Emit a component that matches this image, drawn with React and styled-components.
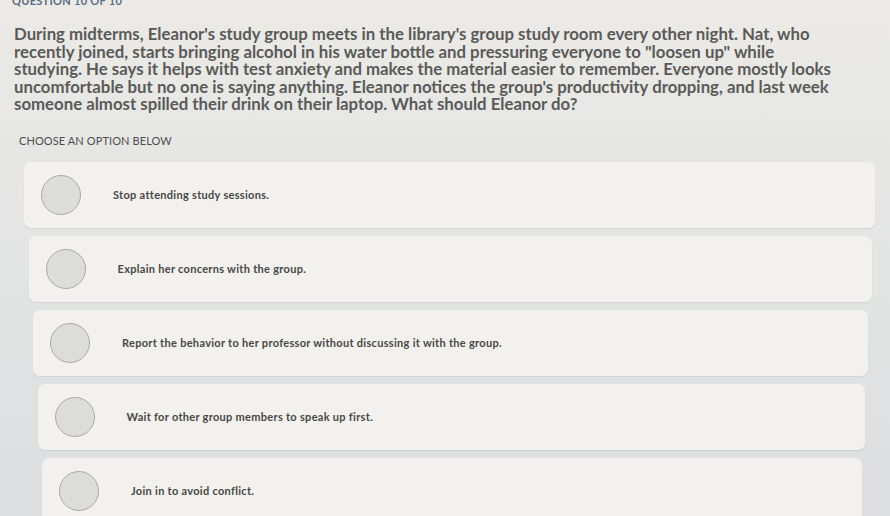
import React from 'react'
import styled, { createGlobalStyle } from 'styled-components'

const GlobalStyle = createGlobalStyle`
    html, body {
        margin: 0;
        padding: 0;
        background: #e6e6e3;
    }
    body {
        font-family: Lato, "Open Sans", "Liberation Sans", sans-serif;
    }
`;

const lines = [
    "During midterms, Eleanor's study group meets in the library's group study room every other night. Nat, who",
    'recently joined, starts bringing alcohol in his water bottle and pressuring everyone to "loosen up" while',
    "studying. He says it helps with test anxiety and makes the material easier to remember. Everyone mostly looks",
    "uncomfortable but no one is saying anything. Eleanor notices the group's productivity dropping, and last week",
    "someone almost spilled their drink on their laptop. What should Eleanor do?",
];

const options = [
    "Stop attending study sessions.",
    "Explain her concerns with the group.",
    "Report the behavior to her professor without discussing it with the group.",
    "Wait for other group members to speak up first.",
    "Join in to avoid conflict.",
];

const App = () => {
    return (
        <Page>
            <GlobalStyle />
            <Counter>QUESTION 10 OF 10</Counter>
            <Question>
                {lines.map((line, i) => <Line key={i}>{line}</Line>)}
            </Question>
            <Prompt>CHOOSE AN OPTION BELOW</Prompt>
            <OptionList>
                {options.map((text, i) => (
                    <OptionCard key={i} step={i}>
                        <Radio />
                        <OptionText>{text}</OptionText>
                    </OptionCard>
                ))}
            </OptionList>
        </Page>
    );
}

const Page = styled.div`
    width: 890px;
    height: 516px;
    overflow: hidden;
    background: linear-gradient(180deg, #ebeae6 0%, #e4e5e4 40%, #dcdee0 100%);
    box-sizing: border-box;
    padding: 0 0 0 12px;
`;

const Counter = styled.div`
    margin-top: -6px;
    height: 12px;
    font-size: 11px;
    font-weight: 700;
    letter-spacing: 0.3px;
    color: #5b6b84;
`;

const Question = styled.div`
    margin-top: 19px;
    padding-left: 2px;
    font-size: 16.8px;
    font-weight: 700;
    line-height: 17.5px;
    color: #5a5a58;
`;

const Line = styled.div`
    white-space: nowrap;
`;

const Prompt = styled.div`
    margin-top: 21px;
    padding-left: 7px;
    font-size: 11px;
    font-weight: 400;
    letter-spacing: 0.1px;
    color: #4e4e4c;
`;

const OptionList = styled.div`
    display: flex;
    flex-direction: column;
    gap: 8px;
    margin-top: 15px;
`;

const OptionCard = styled.div`
    display: flex;
    align-items: center;
    height: 66px;
    margin-left: ${(props) => 12 + props.step * 4.5}px;
    margin-right: ${(props) => 15 + props.step * 3.3}px;
    padding-left: 17px;
    border-radius: 7px;
    background: #f2f1ed;
    box-shadow: 0 1px 1px rgba(120, 125, 135, 0.15);
`;

const Radio = styled.div`
    flex: none;
    width: 38px;
    height: 38px;
    border-radius: 50%;
    background: #dcdcd9;
    border: 1.5px solid #a9a9a7;
`;

const OptionText = styled.div`
    margin-left: 32px;
    font-size: 11px;
    font-weight: 700;
    color: #484846;
    letter-spacing: 0.3px;
`;

export default App;
